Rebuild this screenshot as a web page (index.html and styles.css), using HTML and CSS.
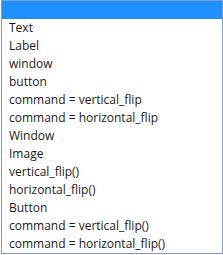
FILE: index.html
```html
<!DOCTYPE html>
<html lang="en">
<head>
    <meta charset="UTF-8">
    <title>Dropdown</title>
    <link rel="stylesheet" href="styles.css">
</head>
<body>
    <ul class="dropdown">
        <li class="item selected"></li>
        <li class="item">Text</li>
        <li class="item">Label</li>
        <li class="item">window</li>
        <li class="item">button</li>
        <li class="item">command = vertical_flip</li>
        <li class="item">command = horizontal_flip</li>
        <li class="item">Window</li>
        <li class="item">Image</li>
        <li class="item">vertical_flip()</li>
        <li class="item">horizontal_flip()</li>
        <li class="item">Button</li>
        <li class="item">command = vertical_flip()</li>
        <li class="item">command = horizontal_flip()</li>
    </ul>
</body>
</html>
```

FILE: styles.css
```css
* {
    margin: 0;
    padding: 0;
    box-sizing: border-box;
}

body {
    font-family: 'Open Sans', 'DejaVu Sans', sans-serif;
    background: #fff;
    color: #1a1a1a;
    padding-left: 1px;
}

.dropdown {
    list-style: none;
    width: 222px;
    border: 1px solid #7f9ccf;
    background: #fff;
}

.item {
    height: 18px;
    line-height: 18px;
    padding-left: 7px;
    font-size: 12px;
    white-space: nowrap;
}

.item.selected {
    background: #1e90ff;
}
```
